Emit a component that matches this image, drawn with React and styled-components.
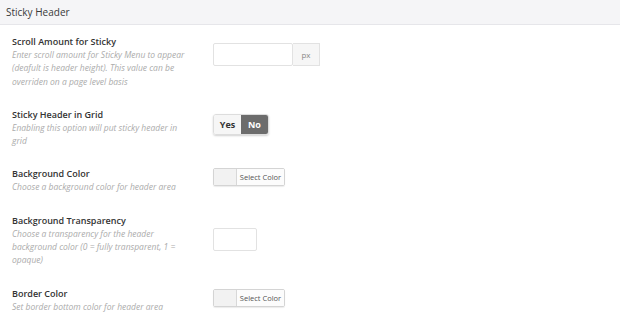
import React from "react";
import styled, { createGlobalStyle } from "styled-components";

const Global = createGlobalStyle`
  html, body {
    margin: 0;
    padding: 0;
    background: #fff;
  }
  body {
    font-family: "Open Sans", "Noto Sans", sans-serif;
    color: #333;
  }
`;

const Panel = styled.div`
  width: 620px;
  height: 330px;
  overflow: hidden;
  background: #fff;
`;

const Header = styled.div`
  height: 24px;
  display: flex;
  align-items: center;
  padding-left: 6px;
  background: #f5f5f7;
  border-bottom: 1px solid #e6e6ea;
  font-size: 10px;
  color: #3a3a3a;
`;

const Body = styled.div`
  display: flex;
  flex-direction: column;
  row-gap: 20px;
  padding: 10px 0 0 12px;
`;

const Row = styled.div`
  display: flex;
  align-items: flex-start;
`;

const Info = styled.div`
  width: 201px;
  flex-shrink: 0;
`;

const Label = styled.div`
  font-size: 9px;
  font-weight: 600;
  line-height: 13px;
  color: #333;
`;

const Desc = styled.div`
  width: 182px;
  font-size: 8.5px;
  font-style: italic;
  line-height: 13.3px;
  color: #ababab;
`;

const Control = styled.div`
  margin-top: ${(p) => p.$offset}px;
  display: flex;
`;

const Input = styled.div`
  width: ${(p) => p.$w}px;
  height: ${(p) => p.$h}px;
  border: 1px solid #e2e2e2;
  border-radius: 2px;
  background: #fff;
  box-sizing: border-box;
`;

const Addon = styled.div`
  width: 27px;
  height: 23px;
  box-sizing: border-box;
  border: 1px solid #e2e2e2;
  border-left: none;
  background: #f6f6f6;
  font-size: 8px;
  color: #888;
  display: flex;
  align-items: center;
  justify-content: center;
`;

const Toggle = styled.div`
  display: flex;
  height: 21px;
  border-radius: 3px;
  overflow: hidden;
  box-shadow: 0 1px 2px rgba(0, 0, 0, 0.18);
  border: 1px solid #ddd;
  box-sizing: border-box;
`;

const ToggleOpt = styled.div`
  width: 27px;
  display: flex;
  align-items: center;
  justify-content: center;
  font-size: 9px;
  font-weight: 700;
  color: ${(p) => (p.$active ? "#fff" : "#333")};
  background: ${(p) => (p.$active ? "#6c6c6c" : "#f6f6f6")};
`;

const ColorBtn = styled.div`
  display: flex;
  height: 18px;
  border: 1px solid #d4d4d4;
  border-radius: 2px;
  box-sizing: border-box;
  box-shadow: 0 1px 1px rgba(0, 0, 0, 0.08);
  overflow: hidden;
`;

const Swatch = styled.div`
  width: 22px;
  background: #f2f2f2;
  border-right: 1px solid #d8d8d8;
`;

const BtnText = styled.div`
  width: 47px;
  display: flex;
  align-items: center;
  justify-content: center;
  font-size: 7.5px;
  color: #555;
  background: #fcfcfc;
`;

function ColorPicker() {
  return (
    <ColorBtn>
      <Swatch />
      <BtnText>Select Color</BtnText>
    </ColorBtn>
  );
}

export default function App() {
  return (
    <Panel>
      <Global />
      <Header>Sticky Header</Header>
      <Body>
        <Row>
          <Info>
            <Label>Scroll Amount for Sticky</Label>
            <Desc>
              Enter scroll amount for Sticky Menu to appear (deafult is header
              height). This value can be overriden on a page level basis
            </Desc>
          </Info>
          <Control $offset={8}>
            <Input $w={80} $h={23} />
            <Addon>px</Addon>
          </Control>
        </Row>

        <Row>
          <Info>
            <Label>Sticky Header in Grid</Label>
            <Desc>Enabling this option will put sticky header in grid</Desc>
          </Info>
          <Control $offset={6}>
            <Toggle>
              <ToggleOpt>Yes</ToggleOpt>
              <ToggleOpt $active>No</ToggleOpt>
            </Toggle>
          </Control>
        </Row>

        <Row>
          <Info>
            <Label>Background Color</Label>
            <Desc>Choose a background color for header area</Desc>
          </Info>
          <Control $offset={1}>
            <ColorPicker />
          </Control>
        </Row>

        <Row>
          <Info>
            <Label>Background Transparency</Label>
            <Desc>
              Choose a transparency for the header background color (0 = fully
              transparent, 1 = opaque)
            </Desc>
          </Info>
          <Control $offset={14}>
            <Input $w={44} $h={23} />
          </Control>
        </Row>

        <Row>
          <Info>
            <Label>Border Color</Label>
            <Desc>Set border bottom color for header area</Desc>
          </Info>
          <Control $offset={2}>
            <ColorPicker />
          </Control>
        </Row>
      </Body>
    </Panel>
  );
}
